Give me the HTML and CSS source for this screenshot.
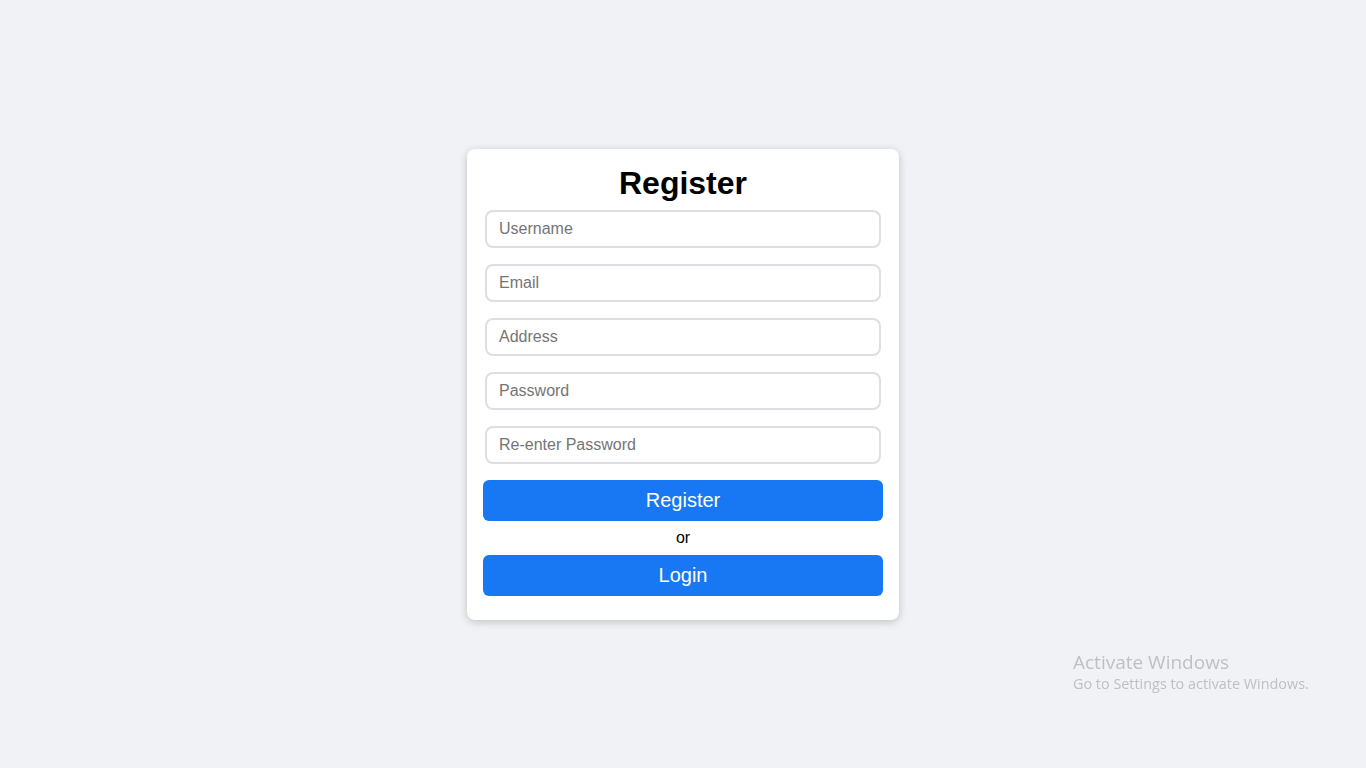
FILE: index.html
```html
<!DOCTYPE html>
<html lang="en">
<head>
<meta charset="utf-8">
<title>Register</title>
<link rel="stylesheet" href="styles.css">
</head>
<body>
<main class="page">
  <form class="card">
    <h1 class="title">Register</h1>
    <input class="field" type="text" placeholder="Username">
    <input class="field" type="email" placeholder="Email">
    <input class="field" type="text" placeholder="Address">
    <input class="field" type="password" placeholder="Password">
    <input class="field" type="password" placeholder="Re-enter Password">
    <button class="btn" type="button">Register</button>
    <p class="or">or</p>
    <button class="btn" type="button">Login</button>
  </form>
</main>
<div class="watermark">
  <div class="wm-title">Activate Windows</div>
  <div class="wm-sub">Go to Settings to activate Windows.</div>
</div>
</body>
</html>
```
FILE: styles.css
```css
* { box-sizing: border-box; }
html, body { margin: 0; padding: 0; }
body {
  background: #f0f2f5;
  font-family: "Liberation Sans", Arial, sans-serif;
}
.page {
  min-height: 100vh;
  display: flex;
  align-items: center;
  justify-content: center;
}
.card {
  width: 432px;
  background: #fff;
  border-radius: 8px;
  box-shadow: 0 2px 8px rgba(0, 0, 0, 0.2);
  padding: 16px 16px 24px;
  display: flex;
  flex-direction: column;
  align-items: center;
}
.title {
  margin: 0 0 8px;
  font-size: 32px;
  font-weight: bold;
  line-height: 37px;
  color: #000;
}
.field {
  width: 396px;
  height: 38px;
  margin: 0 0 16px;
  border: 2px solid #dddfe2;
  border-radius: 8px;
  padding: 0 12px;
  font-family: "Liberation Sans", Arial, sans-serif;
  font-size: 16px;
  color: #1c1e21;
  outline: none;
}
.field::placeholder { color: #757575; }
.btn {
  width: 400px;
  height: 41px;
  border: none;
  border-radius: 6px;
  background: #1877f2;
  color: #fff;
  font-family: "Liberation Sans", Arial, sans-serif;
  font-size: 20px;
  padding: 0;
  cursor: pointer;
}
.or {
  margin: 8px 0;
  font-size: 16px;
  line-height: 18px;
  color: #000;
}
.watermark {
  position: fixed;
  left: 1073px;
  top: 650px;
  font-family: "Open Sans", "Noto Sans", sans-serif;
  color: #bfc0c4;
  pointer-events: none;
}
.wm-title { font-size: 19px; line-height: 24px; }
.wm-sub { font-size: 14.4px; line-height: 20px; }
```
